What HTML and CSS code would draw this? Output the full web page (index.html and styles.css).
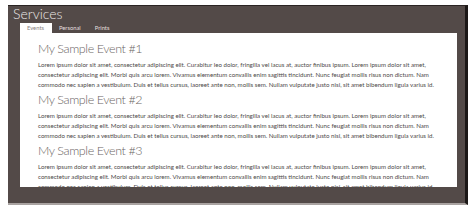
FILE: index.html
```html
<!DOCTYPE html>
<html lang="en">
<head>
  <meta charset="UTF-8">
  <meta name="viewport" content="width=device-width, initial-scale=1.0">
  <title>Services</title>
  <link rel="stylesheet" href="styles.css">
</head>
<body>
  <div class="panel">
    <h1 class="panel-title">Services</h1>
    <ul class="tabs">
      <li class="tab active">Events</li>
      <li class="tab">Personal</li>
      <li class="tab">Prints</li>
    </ul>
    <div class="tab-content">
      <div class="event">
        <h2 class="event-title">My Sample Event #1</h2>
        <p class="event-text">Lorem ipsum dolor sit amet, consectetur adipiscing elit. Curabitur leo dolor, fringilla vel lacus at, auctor finibus ipsum. Lorem ipsum dolor sit amet, consectetur adipiscing elit. Morbi quis arcu lorem. Vivamus elementum convallis enim sagittis tincidunt. Nunc feugiat mollis risus non dictum. Nam commodo nec sapien a vestibulum. Duis et tellus cursus, laoreet ante non, mollis sem. Nullam vulputate justo nisi, sit amet bibendum ligula varius id.</p>
      </div>
      <div class="event">
        <h2 class="event-title">My Sample Event #2</h2>
        <p class="event-text">Lorem ipsum dolor sit amet, consectetur adipiscing elit. Curabitur leo dolor, fringilla vel lacus at, auctor finibus ipsum. Lorem ipsum dolor sit amet, consectetur adipiscing elit. Morbi quis arcu lorem. Vivamus elementum convallis enim sagittis tincidunt. Nunc feugiat mollis risus non dictum. Nam commodo nec sapien a vestibulum. Duis et tellus cursus, laoreet ante non, mollis sem. Nullam vulputate justo nisi, sit amet bibendum ligula varius id.</p>
      </div>
      <div class="event">
        <h2 class="event-title">My Sample Event #3</h2>
        <p class="event-text">Lorem ipsum dolor sit amet, consectetur adipiscing elit. Curabitur leo dolor, fringilla vel lacus at, auctor finibus ipsum. Lorem ipsum dolor sit amet, consectetur adipiscing elit. Morbi quis arcu lorem. Vivamus elementum convallis enim sagittis tincidunt. Nunc feugiat mollis risus non dictum. Nam commodo nec sapien a vestibulum. Duis et tellus cursus, laoreet ante non, mollis sem. Nullam vulputate justo nisi, sit amet bibendum ligula varius id.</p>
      </div>
    </div>
  </div>
</body>
</html>
```

FILE: styles.css
```css
* {
  margin: 0;
  padding: 0;
  box-sizing: border-box;
}

body {
  background-color: #ffffff;
  font-family: 'Lato', 'Liberation Sans', sans-serif;
  padding: 5px 0 0 8px;
}

.panel {
  width: 460px;
  height: 200px;
  background-color: #534a48;
  border-top: 1px solid #2a2423;
  border-right: 3px solid #1c1817;
  border-bottom: 2px solid #a9a3a1;
  padding: 0 8px 0 12px;
  display: flex;
  flex-direction: column;
}

.panel-title {
  font-family: 'Lato', sans-serif;
  font-weight: 300;
  font-size: 14px;
  line-height: 16px;
  color: #ece8e7;
  margin-left: -7px;
  height: 17px;
}

.tabs {
  list-style: none;
  display: flex;
  height: 10px;
}

.tab {
  font-size: 5.8px;
  line-height: 10px;
  color: #e4dfde;
  padding: 0 7px;
}

.tab.active {
  background-color: #ffffff;
  color: #8a8482;
  padding: 0 8px 0 7px;
}

.tab-content {
  background-color: #ffffff;
  height: 154px;
  overflow: hidden;
  padding: 8px 12px 0 18px;
}

.event {
  margin-bottom: 2px;
}

.event-title {
  font-family: 'Lato', sans-serif;
  font-weight: 300;
  font-size: 12.5px;
  letter-spacing: -0.4px;
  line-height: 16px;
  color: #6b6563;
  margin-bottom: 3px;
}

.event-text {
  font-size: 6.15px;
  line-height: 10px;
  color: #4e4a49;
}
```
